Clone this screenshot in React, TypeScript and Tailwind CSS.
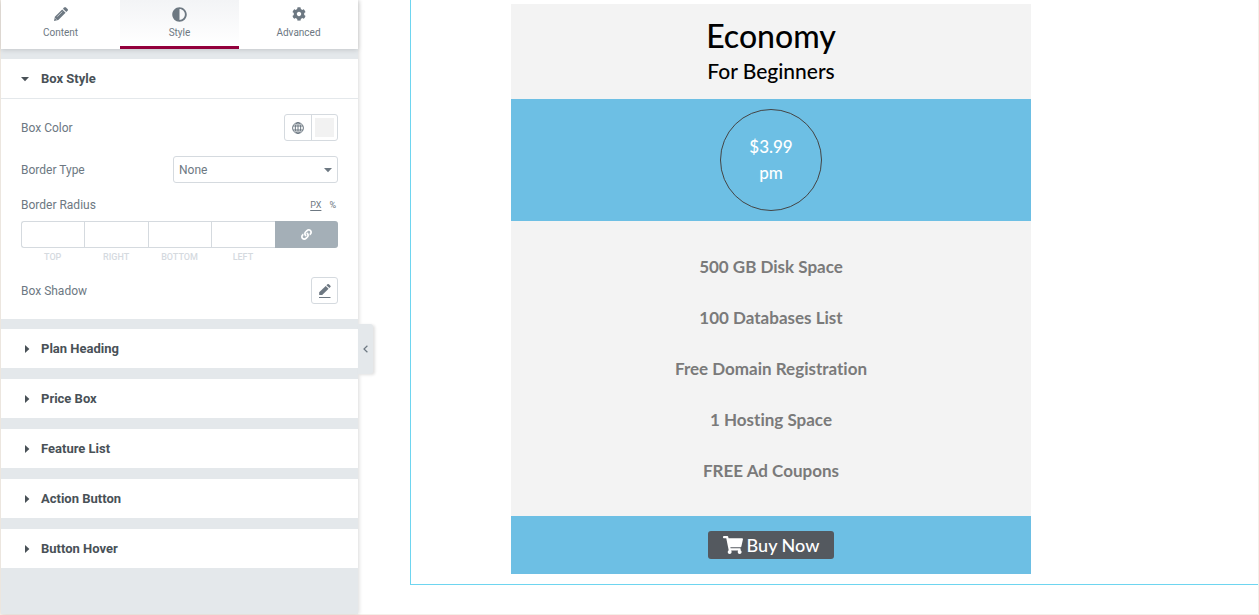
import React, { useState } from 'react';
import { FaAdjust, FaCog, FaLink, FaShoppingCart } from 'react-icons/fa';

const tabs = [
  { id: 'content', label: 'Content', icon: <PencilIcon /> },
  { id: 'style', label: 'Style', icon: <FaAdjust className="w-[15px] h-[15px]" /> },
  { id: 'advanced', label: 'Advanced', icon: <FaCog className="w-[14px] h-[14px]" /> },
];

const sections = ['Plan Heading', 'Price Box', 'Feature List', 'Action Button', 'Button Hover'];

const sides = ['Top', 'Right', 'Bottom', 'Left'];

const features = [
  '500 GB Disk Space',
  '100 Databases List',
  'Free Domain Registration',
  '1 Hosting Space',
  'FREE Ad Coupons',
];

function PencilIcon() {
  return (
    <svg className="w-[14px] h-[14px]" viewBox="0 0 14 14" fill="currentColor">
      <path d="M0 14L0.9 9.7L8.2 2.4L11.6 5.8L4.3 13.1Z" />
      <path d="M8.9 1.7L10.2 0.4Q11.1 -0.3 11.9 0.4L13.6 2.1Q14.3 2.9 13.6 3.8L12.3 5.1Z" />
      <path d="M3.2 9.7L8.2 4.7M1.4 11.4L2.6 12.6" stroke="white" strokeWidth="0.6" />
    </svg>
  );
}

function GlobeIcon() {
  return (
    <svg className="w-3 h-3" viewBox="0 0 12 12" fill="none" stroke="currentColor" strokeWidth="1">
      <circle cx="6" cy="6" r="5.4" />
      <ellipse cx="6" cy="6" rx="2.7" ry="5.4" />
      <path d="M6 0.6V11.4M1.1 4H10.9M1.1 8H10.9" />
    </svg>
  );
}

function EditIcon() {
  return (
    <svg className="w-3 h-[14px]" viewBox="0 0 12 14" fill="currentColor">
      <path d="M0.2 11V8.2L6.7 1.9L9.6 4.7L3.2 11Z" />
      <path d="M7.4 1.2L8.4 0.3Q9.2 -0.2 9.9 0.3L11.4 1.8Q12 2.5 11.4 3.1L10.4 4.1Z" />
      <path d="M0 13H11.5V14H0Z" />
    </svg>
  );
}

function Arrow({ open }: { open?: boolean }) {
  return (
    <svg className="w-2 h-2" viewBox="0 0 8 8" fill="currentColor">
      {open ? <path d="M0 2H8L4 6.2Z" /> : <path d="M2 0L6.4 4L2 8Z" />}
    </svg>
  );
}

function Panel() {
  const [tab, setTab] = useState('style');
  const [unit, setUnit] = useState('px');

  return (
    <aside className="relative flex flex-col shrink-0 w-[357px] bg-[#e4e8eb] text-[#6d7882] text-xs shadow-[1px_0_4px_rgba(0,0,0,0.15)]">
      <nav className="grid grid-cols-3 h-[49px] bg-white shadow-[0_1px_5px_rgba(0,0,0,0.15)]">
        {tabs.map(t => (
          <button
            key={t.id}
            onClick={() => setTab(t.id)}
            className={`flex flex-col items-center pt-[6px] border-b-3 text-[10px] leading-3 ${
              tab === t.id ? 'border-[#93003c] bg-linear-to-b from-[#f3f4f6] to-white' : 'border-transparent'
            }`}
          >
            <span className="flex items-center h-4 mb-[5px]">{t.icon}</span>
            {t.label}
          </button>
        ))}
      </nav>

      {/* Open section */}
      <section className="mt-[10px] bg-white">
        <h2 className="border-b border-[#e4e8eb]">
          <button className="flex items-center gap-3 w-full h-[39px] pl-5 text-[13px] font-bold text-[#495157]">
            <Arrow open />
            Box Style
          </button>
        </h2>

        <div className="flex flex-col gap-[15px] px-5 py-[15px]">
          <div className="flex items-center justify-between">
            <span>Box Color</span>
            <div className="flex w-[54px] h-[27px] border border-[#d5dadf] rounded-[3px]">
              <button aria-label="Global colors" className="flex items-center justify-center w-[27px] border-r border-[#d5dadf]">
                <GlobeIcon />
              </button>
              <button aria-label="Pick color" className="flex-1 p-[3px]">
                <span className="block h-full bg-[#f2f2f2]" />
              </button>
            </div>
          </div>

          <div className="flex items-center justify-between">
            <label htmlFor="border-type">Border Type</label>
            <div className="relative w-[165px]">
              <select
                id="border-type"
                className="appearance-none block w-full h-[27px] px-[5px] border border-[#d5dadf] rounded-[3px] bg-white"
              >
                <option>None</option>
                <option>Solid</option>
                <option>Double</option>
                <option>Dotted</option>
                <option>Dashed</option>
              </select>
              <span className="absolute right-[6px] top-[10px] pointer-events-none"><Arrow open /></span>
            </div>
          </div>

          <fieldset>
            <div className="flex items-center justify-between h-[14px] mb-[9px]">
              <legend>Border Radius</legend>
              <div className="flex gap-2 pr-[2px] text-[9px] leading-[10px]">
                {['px', '%'].map(u => (
                  <button key={u} onClick={() => setUnit(u)} className={`uppercase ${unit === u ? 'underline underline-offset-2' : ''}`}>
                    {u}
                  </button>
                ))}
              </div>
            </div>
            <div className="grid grid-cols-5">
              {sides.map(side => (
                <label key={side} className="group flex flex-col items-center text-[9px] leading-[9px] font-medium uppercase text-[#d5dadf]">
                  <input
                    type="text"
                    className="w-full h-[27px] mb-[5px] px-1 border border-r-0 border-[#d5dadf] group-first:rounded-l-[3px] text-xs text-center text-[#6d7882]"
                  />
                  {side}
                </label>
              ))}
              <button aria-label="Link values" className="flex items-center justify-center h-[27px] rounded-r-[3px] bg-[#a4afb7] text-white">
                <FaLink className="w-[11px] h-[11px]" />
              </button>
            </div>
          </fieldset>

          <div className="flex items-center justify-between">
            <span>Box Shadow</span>
            <button aria-label="Edit box shadow" className="flex items-center justify-center w-[27px] h-[27px] border border-[#d5dadf] rounded-[3px]">
              <EditIcon />
            </button>
          </div>
        </div>
      </section>

      {/* Collapsed sections */}
      <div className="flex flex-col gap-[11px] mt-[10px]">
        {sections.map(name => (
          <h2 key={name} className="bg-white">
            <button className="flex items-center gap-[10px] w-full h-[39px] pl-[22px] text-[13px] font-bold text-[#495157]">
              <Arrow />
              {name}
            </button>
          </h2>
        ))}
      </div>

      <button
        aria-label="Hide panel"
        className="absolute left-full top-[324px] flex items-center justify-center w-[15px] h-[50px] rounded-r-[3px] bg-[#e4e8eb] shadow-[2px_1px_3px_rgba(0,0,0,0.12)]"
      >
        <svg className="w-[5px] h-2" viewBox="0 0 5 8" fill="none" stroke="currentColor" strokeWidth="1.2">
          <path d="M4.4 0.8L1 4L4.4 7.2" />
        </svg>
      </button>
    </aside>
  );
}

function PricingCard() {
  return (
    <article className="w-full max-w-[520px] bg-[#f3f3f3] text-center font-['Lato',sans-serif] [font-variant-ligatures:none]">
      <header className="h-[95px] pt-[13px] text-black">
        <h1 className="text-[32px] leading-[38px] font-medium">Economy</h1>
        <h2 className="text-[21px] leading-8 font-medium">For Beginners</h2>
      </header>
      <div className="flex justify-center py-[10px] bg-[#6dbfe4]">
        <p className="flex flex-col items-center justify-center w-[102px] h-[102px] border border-[#444] rounded-full text-[17px] leading-[26px] font-medium text-white">
          <span>$3.99</span>
          <span>pm</span>
        </p>
      </div>
      <ul className="py-5 text-[17px] leading-[51px] font-bold text-[#7a7a7a]">
        {features.map(f => (
          <li key={f}>{f}</li>
        ))}
      </ul>
      <footer className="flex justify-center py-[15px] bg-[#6dbfe4]">
        <a href="#buy" className="flex items-center justify-center gap-1 w-[126px] h-7 rounded-[3px] bg-[#54595f] text-lg leading-[26px] font-medium text-white">
          <FaShoppingCart className="w-5 h-[18px]" />
          Buy Now
        </a>
      </footer>
    </article>
  );
}

export default function App() {
  return (
    <div className="flex min-h-screen bg-white border border-t-0 border-[#f5efe8] font-['Roboto',sans-serif]">
      <Panel />
      <main className="flex-1 min-w-0 pl-[52px]">
        <div className="border-l border-b border-[#6ed5f0] pl-[100px] pt-1 pb-[10px]">
          <PricingCard />
        </div>
      </main>
    </div>
  );
}
